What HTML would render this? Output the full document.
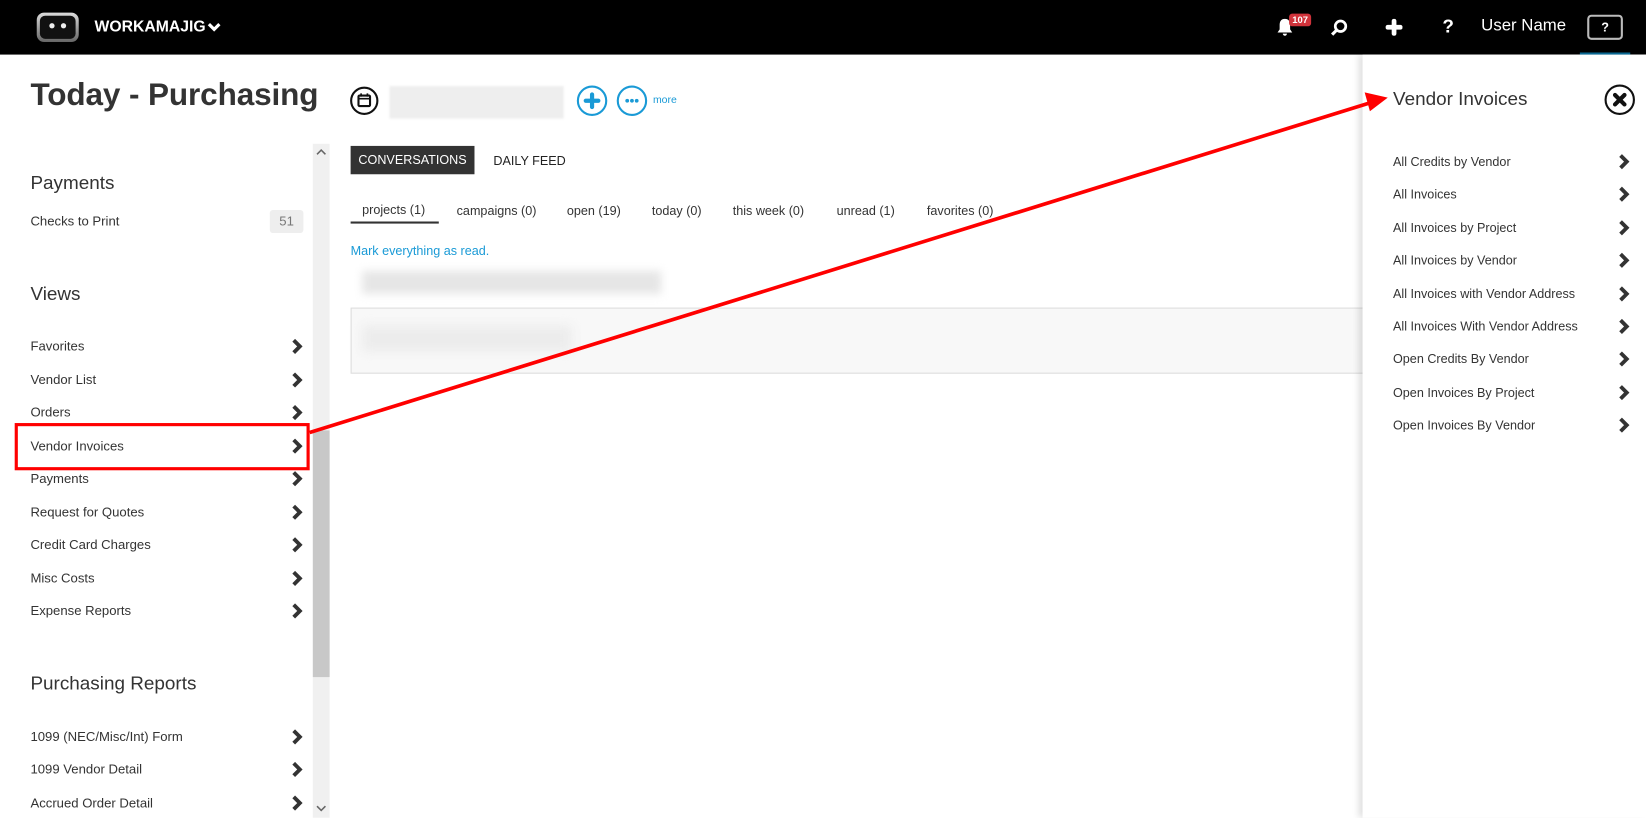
<!DOCTYPE html>
<html><head><meta charset="utf-8">
<style>
html,body{margin:0;padding:0;width:1646px;height:818px;overflow:hidden;background:#fff}
#w{position:absolute;left:0;top:0;width:1568px;height:779px;transform:scale(1.04974);transform-origin:0 0;font-family:"Liberation Sans",sans-serif;color:#333}
.a{position:absolute;white-space:nowrap}
.hdr{left:0;top:0;width:1568px;height:52px;background:#000}
.it{font-size:12.5px;color:#333;transform:translateY(-50%)}
.ch{position:absolute;width:15px;height:15px;transform:translate(-50%,-50%)}
h2{margin:0;font-weight:normal;font-size:18px}
.ft{font-size:12px;transform:translateY(-50%)}
</style></head><body><div id="w">
<div class="a hdr"></div>
<div class="a" style="left:35px;top:12px;width:40px;height:28px;border-radius:7px;background:linear-gradient(#ddd,#666);"></div>
<div class="a" style="left:38px;top:15px;width:34px;height:22px;border-radius:5px;background:#111"></div>
<div class="a" style="left:47px;top:22px;width:5px;height:5px;border-radius:50%;background:#eee"></div>
<div class="a" style="left:58px;top:22px;width:5px;height:5px;border-radius:50%;background:#eee"></div>
<div class="a" style="left:90px;top:17px;font-size:15px;font-weight:bold;color:#fff">WORKAMAJIG</div>
<svg class="a" style="left:197px;top:21px" width="14" height="10"><path d="M2 2l5 5 5-5" stroke="#fff" stroke-width="3" fill="none"/></svg>
<svg class="a" style="left:1215px;top:17px" width="18" height="18"><path d="M9 1c-4 0-5 3-5 6v4l-2 3h14l-2-3V7c0-3-1-6-5-6z M7 15h4a2 2 0 0 1-4 0z" fill="#fff"/></svg>
<div class="a" style="left:1228px;top:13px;width:21px;height:12px;border-radius:3px;background:#d0333b;color:#fff;font-size:9px;font-weight:bold;text-align:center;line-height:12px">107</div>
<svg class="a" style="left:1267px;top:17px" width="18" height="18"><circle cx="10" cy="8" r="5" stroke="#fff" stroke-width="2.6" fill="none"/><path d="M6 12l-4 4" stroke="#fff" stroke-width="3"/></svg>
<svg class="a" style="left:1320px;top:18px" width="16" height="16"><path d="M8 2v12M2 8h12" stroke="#fff" stroke-width="4.5" stroke-linecap="round"/></svg>
<div class="a" style="left:1374px;top:15px;font-size:18px;font-weight:bold;color:#fff">?</div>
<div class="a" style="left:1411px;top:16px;font-size:16px;color:#fff">User Name</div>
<div class="a" style="left:1512px;top:14px;width:30px;height:20px;border:2px solid #bbb;border-radius:4px;color:#fff;font-size:12px;font-weight:bold;text-align:center;line-height:20px">?</div>
<div class="a" style="left:1505px;top:50px;width:48px;height:3px;background:#0b6d99"></div>
<div class="a" style="left:29px;top:74px;font-size:30px;font-weight:bold;color:#333;letter-spacing:-0.1px">Today - Purchasing</div>
<svg class="a" style="left:333px;top:82px" width="28" height="28"><circle cx="14" cy="14" r="12.5" stroke="#111" stroke-width="2" fill="none"/><rect x="8.5" y="9" width="11" height="10" rx="1" stroke="#111" stroke-width="2" fill="none"/><path d="M8.5 12h11M11 7v3M17 7v3" stroke="#111" stroke-width="1.6"/></svg>
<div class="a" style="left:371px;top:82px;width:166px;height:31px;background:#eee;filter:blur(1px)"></div>
<svg class="a" style="left:549px;top:81px" width="30" height="30"><circle cx="15" cy="15" r="13.5" stroke="#1a9ad6" stroke-width="2" fill="none"/><path d="M15 9v12M9 15h12" stroke="#1a9ad6" stroke-width="4" stroke-linecap="round"/></svg>
<svg class="a" style="left:587px;top:81px" width="30" height="30"><circle cx="15" cy="15" r="13.5" stroke="#1a9ad6" stroke-width="2" fill="none"/><circle cx="10.5" cy="15" r="1.8" fill="#1a9ad6"/><circle cx="15" cy="15" r="1.8" fill="#1a9ad6"/><circle cx="19.5" cy="15" r="1.8" fill="#1a9ad6"/></svg>
<div class="a" style="left:622px;top:90px;font-size:10px;color:#1a9ad6">more</div>
<div class="a" style="left:298px;top:137px;width:16px;height:642px;background:#f0f0f0"></div>
<div class="a" style="left:298px;top:410px;width:16px;height:235px;background:#c8c8c8"></div>
<svg class="a" style="left:301px;top:141px" width="10" height="8"><path d="M1 6l4-4 4 4" stroke="#666" stroke-width="1.5" fill="none"/></svg>
<svg class="a" style="left:301px;top:766px" width="10" height="8"><path d="M1 2l4 4 4-4" stroke="#666" stroke-width="1.5" fill="none"/></svg>
<h2 class="a" style="left:29px;top:164px">Payments</h2>
<div class="a it" style="left:29px;top:211px">Checks to Print</div>
<div class="a" style="left:257px;top:200px;width:32px;height:22px;border-radius:3px;background:#eee;color:#777;font-size:12.5px;text-align:center;line-height:22px">51</div>
<h2 class="a" style="left:29px;top:270px">Views</h2>
<h2 class="a" style="left:29px;top:641px">Purchasing Reports</h2>
<div id="sl"></div>
<div class="a" style="left:14px;top:403px;width:275px;height:39px;border:3px solid #f00"></div>
<div class="a" style="left:334px;top:139px;width:118px;height:27px;background:#333;color:#fff;font-size:12px;line-height:27px;text-align:center">CONVERSATIONS</div>
<div class="a" style="left:470px;top:146px;font-size:12px;color:#222">DAILY FEED</div>
<div class="a ft" style="left:345px;top:200px">projects (1)</div>
<div class="a" style="left:334px;top:211px;width:84px;height:2px;background:#333"></div>
<div class="a ft" style="left:435px;top:201px">campaigns (0)</div>
<div class="a ft" style="left:540px;top:201px">open (19)</div>
<div class="a ft" style="left:621px;top:201px">today (0)</div>
<div class="a ft" style="left:698px;top:201px">this week (0)</div>
<div class="a ft" style="left:797px;top:201px">unread (1)</div>
<div class="a ft" style="left:883px;top:201px">favorites (0)</div>
<div class="a ft" style="left:334px;top:239px;color:#1a9ad6">Mark everything as read.</div>
<div class="a" style="left:345px;top:258px;width:285px;height:22px;background:#e6e6e6;filter:blur(4px)"></div>
<div class="a" style="left:334px;top:293px;width:1000px;height:61px;border:1px solid #ddd;background:#f8f8f8"></div>
<div class="a" style="left:345px;top:310px;width:200px;height:25px;background:#ececec;filter:blur(5px)"></div>
<div class="a" style="left:1298px;top:52px;width:270px;height:727px;background:#fff;box-shadow:-4px 0 6px rgba(0,0,0,0.12)"></div>
<div class="a" style="left:1327px;top:84px;font-size:18px;color:#333">Vendor Invoices</div>
<svg class="a" style="left:1528px;top:80px" width="30" height="30"><circle cx="15" cy="15" r="13.5" stroke="#111" stroke-width="2" fill="none"/><path d="M10.5 10.5l9 9M19.5 10.5l-9 9" stroke="#111" stroke-width="4" stroke-linecap="round"/></svg>
<div id="rl"></div>
<svg class="a" style="left:0;top:0" width="1568" height="779"><path d="M295 412L1305 98" stroke="#f00" stroke-width="3.5"/><path d="M1322 93L1300 88L1305 106z" fill="#f00"/></svg>
</div>
<script>
function chev(x,y){return '<svg class="ch" style="left:'+x+'px;top:'+y+'px" viewBox="0 0 14 14"><path d="M4 1.5l5.5 5.5-5.5 5.5" stroke="#333" stroke-width="3.4" fill="none"/></svg>';}
var s='',L=[["Favorites",330],["Vendor List",362],["Orders",393],["Vendor Invoices",425],["Payments",456],["Request for Quotes",488],["Credit Card Charges",519],["Misc Costs",551],["Expense Reports",582],["1099 (NEC/Misc/Int) Form",702],["1099 Vendor Detail",733],["Accrued Order Detail",765]];
L.forEach(function(i){s+='<div class="a it" style="left:29px;top:'+i[1]+'px">'+i[0]+'</div>'+chev(283,i[1]);});
document.getElementById('sl').outerHTML=s;
var r='',R=["All Credits by Vendor","All Invoices","All Invoices by Project","All Invoices by Vendor","All Invoices with Vendor Address","All Invoices With Vendor Address","Open Credits By Vendor","Open Invoices By Project","Open Invoices By Vendor"];
R.forEach(function(t,k){var y=154+k*31.4;r+='<div class="a it" style="left:1327px;top:'+y+'px;font-size:12px">'+t+'</div>'+chev(1547,y);});
document.getElementById('rl').outerHTML=r;
</script>
</body></html>
